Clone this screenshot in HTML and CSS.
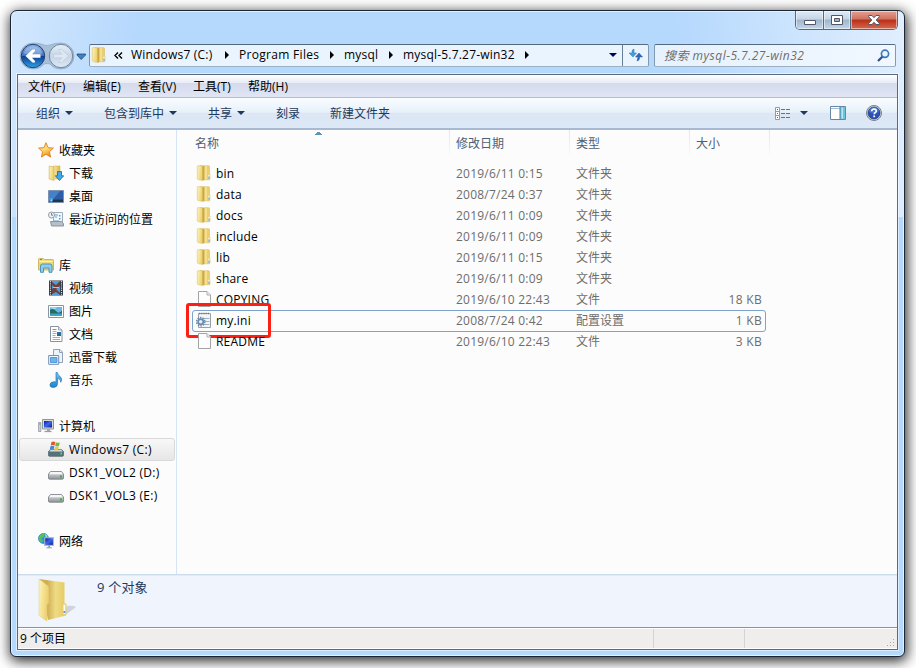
FILE: index.html
```html
<!DOCTYPE html>
<html lang="zh-CN">
<head>
    <meta charset="UTF-8">
    <meta name="viewport" content="width=device-width, initial-scale=1.0">
    <title>mysql-5.7.27-win32</title>
    <link rel="stylesheet" href="styles.css">
</head>
<body>
    <!-- icon definitions -->
    <svg class="defs" width="0" height="0">
        <defs>
            <linearGradient id="gold" x1="0" x2="1" y1="0" y2="0"><stop offset="0" stop-color="#fbeea6"/><stop offset="1" stop-color="#dcb94e"/></linearGradient>
            <linearGradient id="back" x1="0" x2="1" y1="0" y2="0"><stop offset="0.3" stop-color="#cfae50"/><stop offset="0.6" stop-color="#eddb84"/><stop offset="1" stop-color="#e6c95f"/></linearGradient>
            <linearGradient id="fold" x1="0" x2="1" y1="0" y2="0.3"><stop offset="0" stop-color="#fdf5bd"/><stop offset="1" stop-color="#ecd06c"/></linearGradient>
            <linearGradient id="blue" x1="0" x2="0" y1="0" y2="1"><stop offset="0" stop-color="#8cb8ea"/><stop offset="0.48" stop-color="#3f72bd"/><stop offset="0.5" stop-color="#0b3d91"/><stop offset="1" stop-color="#2aa5e8"/></linearGradient>
            <linearGradient id="glass" x1="0" x2="0" y1="0" y2="1"><stop offset="0" stop-color="#e6eff8"/><stop offset="0.5" stop-color="#c5d6e8"/><stop offset="1" stop-color="#d9e8f6"/></linearGradient>
            <linearGradient id="screen" x1="0" x2="1" y1="0" y2="1"><stop offset="0" stop-color="#0819a8"/><stop offset="0.5" stop-color="#3c68e8"/><stop offset="1" stop-color="#0a1c9c"/></linearGradient>
            <linearGradient id="sky" x1="0" x2="0" y1="0" y2="1"><stop offset="0" stop-color="#7cc4f2"/><stop offset="1" stop-color="#1783cf"/></linearGradient>
            <linearGradient id="star" x1="0" x2="0.4" y1="0" y2="1"><stop offset="0" stop-color="#ffb84a"/><stop offset="0.5" stop-color="#ffe37a"/><stop offset="1" stop-color="#f58d1d"/></linearGradient>
            <linearGradient id="disk" x1="0" x2="0" y1="0" y2="1"><stop offset="0" stop-color="#e4e5e8"/><stop offset="1" stop-color="#8f9298"/></linearGradient>
        </defs>
        <symbol id="i-folder" viewBox="0 0 16 16">
            <path d="M4 .7h8.700q.8 0 .8.8V9l.5.6v4.400q0 .8-.8.8H6z" fill="#e9cf70" stroke="#d5b458" stroke-width=".5"/>
            <path d="M1.500.7H5.500q1 0 1 1v13.800L2 14.600q-.7-.2-.7-1V1.200z" fill="url(#fold)" stroke="#d9bd62" stroke-width=".5"/>
            <path d="M6.500 1h1.700v14.300H6.500z" fill="#c9a64b"/>
            <path d="M9 1h2v13.500h-2z" fill="#f3df8c"/>
            <path d="M12.500 9.800h1.100v4h-1.100z" fill="#fff"/><path d="M12.500 11.500h1.100v2.300h-1.100z" fill="#4fa0de"/>
        </symbol>
        <symbol id="i-star" viewBox="0 0 16 16">
            <path d="M8 .7l2.100 5 5.300.4-4 3.600 1.200 5.400L8 12.200l-4.600 2.900 1.200-5.400-4-3.600 5.300-.4z" fill="url(#star)" stroke="#dd7f24" stroke-width=".9"/>
        </symbol>
        <symbol id="i-download" viewBox="0 0 16 16">
            <path d="M5 1h7v13H5z" fill="url(#gold)" stroke="#cfae55" stroke-width=".5"/>
            <path d="M1.200 1L6 2v13.500L1.200 14z" fill="url(#fold)" stroke="#d0b057" stroke-width=".6"/>
            <path d="M9.500 6.500h4v4.300h2.200l-4.200 4.700-4.200-4.700h2.200z" fill="#42a9ea" stroke="#1269b0" stroke-width=".8"/>
        </symbol>
        <symbol id="i-desktop" viewBox="0 0 16 16">
            <path d="M.5 2.500h15v12H.5z" fill="#1d3d73" stroke="#7c92b4"/>
            <path d="M1 3h14v8.500H1z" fill="#2c5ea8"/><path d="M1 3h11L5 11.500H1z" fill="#4580c8"/>
            <path d="M1 12h14v2H1z" fill="#26344a"/><circle cx="3" cy="12" r="1.900" fill="#4fa7e5"/>
            <path d="M2 11h1v1H2z" fill="#e65b32"/><path d="M3 11h1v1H3z" fill="#8bd048"/><path d="M3 12h1v1H3z" fill="#f8cf3d"/>
        </symbol>
        <symbol id="i-recent" viewBox="0 0 16 16">
            <path d="M5.500 1.500h9v10h-9z" fill="#f4f7fb" stroke="#9daab7"/>
            <path d="M2.500 10.500h11l2 2v2.500h-12z" fill="#b8bec5" stroke="#8c949d"/>
            <path d="M7 4h3M7 6h2M6 10h5" stroke="#53a6d8" stroke-width="1.200"/><path d="M11 4h1.500v1.500H11zM11 7h1.500v1.500H11z" fill="#5a9bd0"/>
            <circle cx="3.500" cy="4" r="3" fill="#eef1f5" stroke="#929ba7"/><path d="M3.500 2v2.200H5" fill="none" stroke="#596879" stroke-width=".8"/>
        </symbol>
        <symbol id="i-library" viewBox="0 0 16 16">
            <path d="M.5 2.500q0-1 1-1h4l1 1h8q1 0 1 1v9.500H.5z" fill="#eed879" stroke="#c7a950" stroke-width=".8"/>
            <path d="M1.500 4.500h13" stroke="#fff4b8"/><path d="M2 2.500h2" stroke="#45ac3f" stroke-width="1.200"/>
            <path d="M2.500 15.300V9q0-2 2-2h7.500q2 0 2 2v6.300h-3V11h-5.500v4.300z" fill="#8bcff0" stroke="#3c8dbd" stroke-width=".9"/>
        </symbol>
        <symbol id="i-video" viewBox="0 0 16 16">
            <path d="M1 .5h14v15H1z" fill="#303843"/><path d="M4 1h8v14H4z" fill="#4d9edb"/>
            <path d="M4 2l4 3 4-4v5L8 9l4 4v2L8 12l-4 2v-5l2-2-2-2z" fill="#70403c"/>
            <path d="M5 7.500h6" stroke="#8ad1f5"/>
            <path d="M2.500 1v14M13.500 1v14" stroke="#d6dde4" stroke-width="1.200" stroke-dasharray="1.200 1"/>
        </symbol>
        <symbol id="i-picture" viewBox="0 0 16 16">
            <path d="M.5 2.500h15v12H.5z" fill="#fff" stroke="#8b959f"/><path d="M2 4h12v9H2z" fill="#68b7e9"/>
            <path d="M2 7q3-2.500 6 1t6-.5V11H2z" fill="#266b60"/><path d="M2 10.500h12V13H2z" fill="#3fa3c9"/><path d="M2 4.500q4 2.500 7 0z" fill="#c9ecfb"/>
        </symbol>
        <symbol id="i-doc" viewBox="0 0 16 16">
            <path d="M2.500.5h8l3.500 3.500v11.500H2.500z" fill="#fff" stroke="#89939e"/><path d="M10.500.5V4H14" fill="#e2e6eb" stroke="#89939e" stroke-width=".8"/>
            <path d="M4.500 3.500h4" stroke="#56a79d"/><path d="M4.500 5.500h4M4.500 7.500h4M4.500 9.500h3M4.500 11.500h7.500M4.500 13.500h7.500" stroke="#9cabd0"/>
            <path d="M9 6h4v4H9z" fill="#2c6db8"/><path d="M9 9q2-2 4 0v1H9z" fill="#2c705f"/>
        </symbol>
        <symbol id="i-thunder" viewBox="0 0 16 16">
            <path d="M5.500.5H12l2.500 2.500v10.500h-9z" fill="#edf3fa" stroke="#8fa2b7"/><path d="M11.500.5v3h3" fill="none" stroke="#8fa2b7"/>
            <path d="M.7 6.500h10v8.800H.7z" fill="#f5fafe" stroke="#768fae"/><path d="M2.500 8.500h6.500v5H2.500z" fill="#69b5f2" stroke="#438cd2" stroke-width=".8"/>
        </symbol>
        <symbol id="i-music" viewBox="0 0 16 16">
            <path d="M8 .5h1.300q.2 2.200 2.600 3.800 3 2.200.9 6 .2-3.300-3.200-4v5.200q-.2 3.800-4.200 4-3.500 0-3.500-2.500 0-3 4-3.300 1.300 0 2.100.4z" fill="url(#sky)" stroke="#2179b5" stroke-width=".7"/>
        </symbol>
        <symbol id="i-computer" viewBox="0 0 16 16">
            <path d="M.6 4.500h2.300v9H.6z" fill="#cfd3d6" stroke="#858c92" stroke-width=".7"/><path d="M1.200 6h1.200" stroke="#4bae43"/>
            <path d="M4.500 1.500h11v9.500h-11z" fill="#d8dadd" stroke="#8e949b"/><path d="M6 3h8v6.500H6z" fill="url(#screen)"/>
            <path d="M9 11h3v2H9z" fill="#a5a9ae"/><path d="M6.500 13.500h7" stroke="#999ea4" stroke-width="1.300"/>
        </symbol>
        <symbol id="i-drive" viewBox="0 0 16 16">
            <path d="M2.500 5.500h11L15.500 8v4q0 1.200-1.200 1.200H1.700Q.5 13.200.5 12V8z" fill="url(#disk)" stroke="#777b82" stroke-width=".8"/>
            <path d="M2.800 6h10.400l1.500 2.200H1.300z" fill="#f5f6f7"/><path d="M12 9.300h1.800v2.500H12z" fill="#3cb532"/>
        </symbol>
        <symbol id="i-windrive" viewBox="0 0 16 16">
            <path d="M2.500 8.500h11l2 2v3.800q0 1-1 1h-13q-1 0-1-1v-3.800z" fill="#52737e" stroke="#5c6a72" stroke-width=".8"/>
            <path d="M2.800 8.700h10.400l1.500 1.800H1.300z" fill="#d4dce0"/><path d="M12.400 11.500h1.600v2h-1.600z" fill="#51e03e"/>
            <path d="M3.500 1q2-1.200 3.800 0L6.500 4.600q-2-1-3.800 0z" fill="#e8532b"/><path d="M7.900 1.300q1.800 1 3.900.1l-.9 3.500q-2 1-3.800-.1z" fill="#74b842"/>
            <path d="M2.500 5.200q2-1 3.900 0l-.9 3.500q-2-1-3.800 0z" fill="#3f8cd8"/><path d="M7 5.500q1.800 1 3.800.1L9.900 9q-2 1-3.700-.1z" fill="#f7c52e"/>
        </symbol>
        <symbol id="i-network" viewBox="0 0 16 16">
            <circle cx="5.500" cy="5.500" r="5" fill="#2696dc" stroke="#2077b5" stroke-width=".7"/>
            <path d="M2 2q3-2.500 5-1L5.500 4 3 5.500 5 8 3.500 10Q.5 8 .8 5z" fill="#5cc152"/><path d="M7 1l2.800 2-2 1.500z" fill="#bfefac"/>
            <path d="M6.500 4.500h9v8h-9z" fill="#dbe2ee" stroke="#98a1b2" stroke-width=".7"/><path d="M7.200 5.200h7.700V11.900H7.200z" fill="url(#screen)"/>
            <path d="M10.300 12.500h1.700v1.800h-1.700z" fill="#8f96a1"/><path d="M8.500 14.800h5.300" stroke="#8f96a1"/>
        </symbol>
        <symbol id="i-file" viewBox="0 0 16 16">
            <path d="M2.500.5h8.500l3.500 3.500v11.500h-12z" fill="#fdfdfd" stroke="#a3a3a3"/><path d="M11 .5v3.500h3.500" fill="#eee" stroke="#b0b0b0"/>
        </symbol>
        <symbol id="i-ini" viewBox="0 0 16 16">
            <path d="M2.500 1.500h12v14h-12z" fill="#f2f5f7" stroke="#9aa0a6"/><path d="M3 1.500h11" stroke="#777" stroke-width="1.600" stroke-dasharray="1.200 1"/>
            <path d="M8 6.500h5.500M9 9.500h4.500M8 12.500h5.500" stroke="#9cb4c8"/>
            <circle cx="4.700" cy="9.700" r="4.100" fill="none" stroke="#6c89a8" stroke-width="1.500" stroke-dasharray="1.500 1.080"/>
            <circle cx="4.700" cy="9.700" r="2.600" fill="#e5eefa" stroke="#6c89a8" stroke-width="1.600"/>
        </symbol>
    </svg>

    <div class="window">
        <div class="titlebar">
            <div class="caption-buttons">
                <span class="caption-btn"><svg width="12" height="6" viewBox="0 0 12 6"><path d="M.5 1.500h11v4H.5z" fill="#fff" stroke="#535666"/></svg></span>
                <span class="caption-btn"><svg width="12" height="10" viewBox="0 0 12 10"><path d="M.5.5h11v9H.5z" fill="#fff" stroke="#535666"/><path d="M3.500 3.500h5v3h-5z" fill="#9fb5cd" stroke="#535666"/></svg></span>
                <span class="caption-btn close-btn"><svg width="12" height="10" viewBox="0 0 12 10"><path d="M.7.500H4L6 2.700 8 .5h3.300v1.300L8.200 5l3.100 3.200v1.300H8L6 7.300 4 9.500H.7V8.200L3.800 5 .7 1.800z" fill="#fff" stroke="#535666"/></svg></span>
            </div>
        </div>

        <div class="navbar">
            <svg class="nav-buttons" width="68" height="28" viewBox="0 0 68 28">
                <path d="M14 1q7 0 11 2 3 1 6 0 5-2 11-2a13 13 0 0 1 0 26q-7 0-11-5-3-1-6 0-4 5-11 5a13 13 0 0 1 0-26z" fill="#a9bfd8" stroke="#8ea5c0" stroke-width=".7"/>
                <circle cx="14" cy="14" r="11.700" fill="url(#blue)" stroke="#25406f" stroke-width="1"/>
                <path d="M4.500 11.500A10 10 0 0 1 23.500 11.500Q14 14 4.500 11.500z" fill="#fff" opacity=".25"/>
                <path d="M6.500 14l7-6.500h2.500V9l-3 3.200h8.500v3.600H13l3 3.200v1.500h-2.500z" fill="#fff"/>
                <circle cx="42" cy="14" r="11.700" fill="url(#glass)" stroke="#71849b" stroke-width="1"/>
                <path d="M49.500 14l-7-6.500H40V9l3 3.200h-8.500v3.600H43L40 19v1.500h2.500z" fill="#dfe8f2" stroke="#b8c8da" stroke-width=".6"/>
                <path d="M58 12h8.500v1L62.200 17.500 58 13z" fill="#3d83bd" stroke="#1b4a80" stroke-width=".8"/>
            </svg>
            <div class="address">
                <svg class="icon"><use href="#i-folder"/></svg>
                <svg class="chevrons" width="9" height="7" viewBox="0 0 9 7"><path d="M4 .5L1 3.500l3 3M8 .5L5 3.500l3 3" fill="none" stroke="#000" stroke-width="1.400"/></svg>
                <span class="crumb crumb-drive">Windows7 (C:)</span><i class="arrow-right"></i>
                <span class="crumb crumb-programs">Program Files</span><i class="arrow-right"></i>
                <span class="crumb crumb-mysql">mysql</span><i class="arrow-right"></i>
                <span class="crumb crumb-current">mysql-5.7.27-win32</span><i class="arrow-right"></i>
                <i class="arrow-down history"></i>
                <span class="refresh"><svg width="16" height="14" viewBox="0 0 16 14"><path d="M6 1Q3.500 1.500 4 5H1l4 4 3.500-4H6z" fill="#3aa2dc" stroke="#2878b8" stroke-width=".5"/><path d="M9 13q3-.5 2.500-4h3L11 5 7.500 9H10z" fill="#3267ba" stroke="#2756a5" stroke-width=".5"/></svg></span>
            </div>
            <div class="search">
                <span class="search-text">搜索 mysql-5.7.27-win32</span>
                <svg width="13" height="13" viewBox="0 0 13 13"><circle cx="8" cy="4.800" r="3.600" fill="#eaf5ff" stroke="#3d7ab8" stroke-width="1.700"/><path d="M5.300 7.700L1 12" stroke="#2b4d96" stroke-width="2.200"/></svg>
            </div>
        </div>

        <div class="client">
            <div class="menubar">
                <span>文件(F)</span>
                <span>编辑(E)</span>
                <span>查看(V)</span>
                <span>工具(T)</span>
                <span>帮助(H)</span>
            </div>

            <div class="toolbar">
                <span class="tool tool-organize">组织<i class="arrow-down"></i></span>
                <span class="tool tool-include">包含到库中<i class="arrow-down"></i></span>
                <span class="tool tool-share">共享<i class="arrow-down"></i></span>
                <span class="tool tool-burn">刻录</span>
                <span class="tool">新建文件夹</span>
                <div class="view-tools">
                    <svg width="16" height="13" viewBox="0 0 16 13"><path d="M.5.500h4v12h-4zM.5 4.500h4M.5 8.500h4" fill="#fff" stroke="#8f9bad"/><path d="M2 2h1v1H2zM2 10h1v1H2z" fill="#3b639e"/><path d="M2 6h1v1H2z" fill="#e0342b"/><path d="M6 2.500h9.500M6 6.500h9.500M6 10.500h9.500" stroke="#63728b" stroke-dasharray="4 1"/></svg>
                    <i class="arrow-down"></i>
                    <svg class="preview-icon" width="16" height="14" viewBox="0 0 16 14"><path d="M.5.500h15v13H.5z" fill="#fff" stroke="#6787a6"/><path d="M1 2.500h9" stroke="#a6bdd2"/><path d="M10 1h5v12h-5z" fill="#6cc5dc"/><path d="M10 .5v13" stroke="#4e7e9f"/><path d="M11.500 1.500h1.500v11h-1.500z" fill="#b4e9f3"/></svg>
                    <svg class="help-icon" width="16" height="16" viewBox="0 0 16 16"><circle cx="8" cy="8" r="7.500" fill="#d7dce6" stroke="#777f8d"/><circle cx="8" cy="8" r="6" fill="#2951b6" stroke="#1b3176" stroke-width=".7"/><path d="M3 7a5 5 0 0 1 10 0q-5 2-10 0z" fill="#6d92df" opacity=".5"/><path d="M5.700 6.300Q5.800 4 8.100 4q2.300.1 2.200 2 0 1-1.200 1.800-.9.600-.9 1.500" fill="none" stroke="#fff" stroke-width="1.700"/><path d="M7.300 10.500H9.100v1.700H7.300z" fill="#fff"/></svg>
                </div>
            </div>

            <div class="main">
                <div class="sidebar">
                    <div class="group">
                        <div class="side-item top"><svg class="icon"><use href="#i-star"/></svg>收藏夹</div>
                        <div class="side-item"><svg class="icon"><use href="#i-download"/></svg>下载</div>
                        <div class="side-item"><svg class="icon"><use href="#i-desktop"/></svg>桌面</div>
                        <div class="side-item"><svg class="icon"><use href="#i-recent"/></svg>最近访问的位置</div>
                    </div>
                    <div class="group">
                        <div class="side-item top"><svg class="icon"><use href="#i-library"/></svg>库</div>
                        <div class="side-item"><svg class="icon"><use href="#i-video"/></svg>视频</div>
                        <div class="side-item"><svg class="icon"><use href="#i-picture"/></svg>图片</div>
                        <div class="side-item"><svg class="icon"><use href="#i-doc"/></svg>文档</div>
                        <div class="side-item"><svg class="icon"><use href="#i-thunder"/></svg>迅雷下载</div>
                        <div class="side-item"><svg class="icon"><use href="#i-music"/></svg>音乐</div>
                    </div>
                    <div class="group">
                        <div class="side-item top"><svg class="icon"><use href="#i-computer"/></svg>计算机</div>
                        <div class="side-item latin active"><svg class="icon"><use href="#i-windrive"/></svg>Windows7 (C:)</div>
                        <div class="side-item latin drive"><svg class="icon"><use href="#i-drive"/></svg>DSK1_VOL2 (D:)</div>
                        <div class="side-item latin drive"><svg class="icon"><use href="#i-drive"/></svg>DSK1_VOL3 (E:)</div>
                    </div>
                    <div class="group">
                        <div class="side-item top"><svg class="icon"><use href="#i-network"/></svg>网络</div>
                    </div>
                </div>

                <div class="files">
                    <div class="file-header">
                        <span class="sorted">名称</span>
                        <span>修改日期</span>
                        <span>类型</span>
                        <span>大小</span>
                    </div>
                    <div class="file-row"><span class="name"><svg class="icon"><use href="#i-folder"/></svg>bin</span><span class="date">2019/6/11 0:15</span><span>文件夹</span><span></span></div>
                    <div class="file-row"><span class="name"><svg class="icon"><use href="#i-folder"/></svg>data</span><span class="date">2008/7/24 0:37</span><span>文件夹</span><span></span></div>
                    <div class="file-row"><span class="name"><svg class="icon"><use href="#i-folder"/></svg>docs</span><span class="date">2019/6/11 0:09</span><span>文件夹</span><span></span></div>
                    <div class="file-row"><span class="name"><svg class="icon"><use href="#i-folder"/></svg>include</span><span class="date">2019/6/11 0:09</span><span>文件夹</span><span></span></div>
                    <div class="file-row"><span class="name"><svg class="icon"><use href="#i-folder"/></svg>lib</span><span class="date">2019/6/11 0:15</span><span>文件夹</span><span></span></div>
                    <div class="file-row"><span class="name"><svg class="icon"><use href="#i-folder"/></svg>share</span><span class="date">2019/6/11 0:09</span><span>文件夹</span><span></span></div>
                    <div class="file-row"><span class="name"><svg class="icon"><use href="#i-file"/></svg>COPYING</span><span class="date">2019/6/10 22:43</span><span>文件</span><span class="size">18 KB</span></div>
                    <div class="file-row focused"><span class="name"><svg class="icon"><use href="#i-ini"/></svg>my.ini</span><span class="date">2008/7/24 0:42</span><span>配置设置</span><span class="size">1 KB</span><b class="marker"></b></div>
                    <div class="file-row"><span class="name"><svg class="icon"><use href="#i-file"/></svg>README</span><span class="date">2019/6/10 22:43</span><span>文件</span><span class="size">3 KB</span></div>
                </div>
            </div>

            <div class="details">
                <svg width="42" height="46" viewBox="0 0 42 46">
                    <path d="M27 38l12-9q-4-2-9-1z" fill="#aab4c2" opacity=".5"/>
                    <path d="M2 1l25.500 3.500V25l2 1v10q0 1.500-1.500 1.800L11 42z" fill="url(#back)"/>
                    <path d="M2 1l8.500 6.500q1 .7 1 2V25l-1.700 2 .2 16.200L2.800 38q-.8-.7-.8-2z" fill="url(#fold)" stroke="#e6cf7c" stroke-width=".5"/>
                    <path d="M26.500 26.500h1.800v9.500h-1.800z" fill="#fff"/><path d="M26.500 33h1.800v2h-1.800z" fill="#4e9dd5"/>
                </svg>
                <span>9 个对象</span>
            </div>

            <div class="statusbar">
                <span class="status-text">9 个项目</span>
                <span class="status-cell"></span>
                <span class="status-cell status-grip">
                    <svg width="9" height="9" viewBox="0 0 9 9"><path d="M7 1h1v1H7zM4 4h1v1H4zM7 4h1v1H7zM1 7h1v1H1zM4 7h1v1H4zM7 7h1v1H7z" fill="#a9a6a6"/></svg>
                </span>
            </div>
        </div>
    </div>
</body>
</html>
```

FILE: styles.css
```css
* {
    box-sizing: border-box;
}
body {
    margin: 0;
    padding: 10px;
    height: 668px;
    overflow: hidden;
    background: #fff;
    font-family: "Open Sans", "Noto Sans CJK SC", sans-serif;
    font-size: 12px;
    line-height: 18px;
    color: #000;
}
.defs {
    position: absolute;
}
.icon {
    width: 16px;
    height: 16px;
    flex: none;
}
.window {
    width: 895px;
    height: 647px;
    padding: 0 6px;
    border: 1px solid #1c2632;
    border-radius: 7px 7px 6px 6px;
    background:
        linear-gradient(100deg, rgba(255,255,255,.4) 0, rgba(255,255,255,0) 130px) no-repeat 0 0 / 100% 206px,
        linear-gradient(260deg, rgba(255,255,255,.6) 0, rgba(255,255,255,0) 230px) no-repeat 0 0 / 100% 206px,
        #b5d8fd;
    box-shadow: inset 0 0 0 1px #e4f2ff, 1px 3px 13px 1px rgba(0, 0, 0, .85);
}
.titlebar {
    height: 33px;
    display: flex;
    justify-content: flex-end;
}
.caption-buttons {
    display: flex;
    height: 19px;
    width: 103px;
    border: 1px solid #56697c;
    border-top: none;
    border-radius: 0 0 5px 5px;
    overflow: hidden;
}
.caption-btn {
    display: flex;
    align-items: center;
    justify-content: center;
    width: 27px;
    border-right: 1px solid #56697c;
    background: linear-gradient(#e0ebf6, #c5d5e6 45%, #9eb5cc 50%, #c1d6e9);
    box-shadow: inset 0 0 0 1px rgba(255, 255, 255, .5);
}
.caption-btn:first-child {
    width: 28px;
}
.caption-btn:first-child svg {
    margin-top: 4px;
}
.caption-btn.close-btn {
    flex: 1;
    border-right: none;
    background: linear-gradient(#e4a193, #d0715f 45%, #b92f19 50%, #d6694d);
}

/* address row */
.navbar {
    display: flex;
    height: 22px;
    align-items: center;
    margin-bottom: 8px;
}
.nav-buttons {
    flex: none;
    margin: -3px 2px -4px 2px;
}
.address {
    display: flex;
    align-items: center;
    width: 560px;
    height: 23px;
    margin-right: 5px;
    padding-left: 1px;
    border: 1px solid #67809a;
    border-color: #536a82 #8298ae #9cb0c4;
    border-radius: 2px;
    background: #eaf4fe;
}
.chevrons {
    margin: 0 8px 0 7px;
}
.crumb {
    white-space: nowrap;
    letter-spacing: .2px;
}
.crumb-drive {
    width: 94px;
}
.crumb-programs {
    width: 91px;
    letter-spacing: .3px;
}
.crumb-mysql {
    width: 45px;
}
.crumb-current {
    width: 122px;
}
.arrow-right {
    width: 4px;
    margin-right: 10px;
    border: 4px solid transparent;
    border-left-color: #000;
    border-right: none;
}
.arrow-down {
    display: inline-block;
    border: 4px solid transparent;
    border-top-color: #1e395b;
    border-bottom: none;
}
.history {
    margin-left: auto;
    margin-right: 5px;
    border-top-color: #000060;
}
.refresh {
    display: flex;
    align-items: center;
    justify-content: center;
    width: 26px;
    height: 21px;
    border-left: 1px solid #67809a;
}
.search {
    display: flex;
    align-items: center;
    justify-content: space-between;
    width: 242px;
    height: 23px;
    padding: 0 5px 0 9px;
    border: 1px solid #67809a;
    border-color: #536a82 #8298ae #9cb0c4;
    border-radius: 2px;
    background: linear-gradient(90deg, #e6f2fe, #f0f7ff);
    color: #6d6d6d;
    font-style: italic;
}
.search-text {
    padding-top: 1px;
    letter-spacing: .5px;
}

/* client area */
.client {
    display: flex;
    flex-direction: column;
    width: 881px;
    height: 576px;
    border: 1px solid #586b80;
    box-shadow: 0 0 0 1px rgba(255, 255, 255, .55);
    background: #fcfcfc;
}
.menubar {
    display: flex;
    flex: none;
    height: 23px;
    padding-left: 10px;
    line-height: 23px;
    border-bottom: 1px solid #b4bdd0;
    background: linear-gradient(#fff, #e9ecf6 35%, #d5daec 37%, #e1e6f6);
}
.menubar span {
    width: 55px;
    white-space: nowrap;
}
.toolbar {
    display: flex;
    flex: none;
    align-items: center;
    height: 32px;
    padding-left: 18px;
    border-bottom: 2px solid #a9b9d1;
    background: linear-gradient(#fafdff, #e6f0fa 48%, #dce6f4 50%, #dde9f7);
    color: #1e395b;
}
.tool {
    display: flex;
    align-items: center;
    padding-top: 2px;
    white-space: nowrap;
}
.tool .arrow-down {
    margin: -2px 0 0 5px;
}
.tool-organize {
    width: 68px;
}
.tool-include {
    width: 104px;
}
.tool-share {
    width: 68px;
}
.tool-burn {
    width: 54px;
}
.view-tools {
    display: flex;
    align-items: center;
    margin-left: auto;
    margin-right: 15px;
}
.view-tools .arrow-down {
    margin-left: 9px;
}
.preview-icon {
    margin-left: 22px;
}
.help-icon {
    margin-left: 20px;
}
.main {
    display: flex;
    flex: none;
    height: 444px;
}
.sidebar {
    width: 159px;
    padding-top: 8px;
    border-right: 1px solid #d6e5f5;
}
.group {
    margin-bottom: 23px;
}
.side-item {
    display: flex;
    align-items: center;
    gap: 5px;
    height: 23px;
    margin: 0 1px;
    padding: 2px 0 0 29px;
    white-space: nowrap;
}
.side-item .icon {
    margin-top: -2px;
}
.side-item.top {
    padding-left: 19px;
}
.side-item.active {
    margin: 1px 1px -1px;
    padding: 0 0 0 28px;
    border: 1px solid #d9d9d9;
    border-radius: 3px;
    background: linear-gradient(#f8f8f8, #e6e6e6);
}
.side-item.drive .icon {
    margin-top: 2px;
}
.latin {
    letter-spacing: .3px;
}

/* file list */
.files {
    flex: 1;
    padding-left: 15px;
}
.file-header,
.file-row {
    display: grid;
    grid-template-columns: 258px 120px 120px 76px;
    align-items: center;
}
.file-header {
    grid-template-columns: 258px 120px 120px 80px;
    height: 24px;
    margin-bottom: 8px;
    color: #4c607a;
}
.file-header span {
    height: 24px;
    padding: 5px 0 0 6px;
    border-right: 1px solid;
    border-image: linear-gradient(#dce8f4, #f4f8fb) 1;
}
.file-header .sorted {
    padding-left: 3px;
    background: conic-gradient(from 135deg at 50% 0, #5898b5 90deg, transparent 0) no-repeat 123px 1px / 8px 4px;
}
.file-row {
    position: relative;
    width: 574px;
    height: 21px;
    color: #6d6d6d;
}
.file-row span {
    padding: 2px 0 0 6px;
}
.file-row .name {
    display: flex;
    align-items: center;
    gap: 4px;
    padding-left: 4px;
    color: #000;
    letter-spacing: .2px;
}
.name .icon {
    margin-top: -2px;
}
.file-row .date {
    letter-spacing: .23px;
}
.file-row .size {
    padding: 2px 4px 0 0;
    text-align: right;
    letter-spacing: .3px;
}
.focused::before {
    content: "";
    position: absolute;
    inset: 1px 0 -2px;
    border: 1px solid #7da2ce;
    border-radius: 3px;
}
.marker {
    position: absolute;
    left: -6px;
    top: -6px;
    width: 85px;
    height: 35px;
    border: 3px solid #fb1f14;
    border-radius: 3px;
}

/* bottom panes */
.details {
    display: flex;
    flex: none;
    height: 53px;
    padding: 3px 0 0 19px;
    border-top: 1px solid #cddcec;
    box-shadow: inset 0 1px #e1ebf7;
    background: #f0f4fc;
    color: #1e395b;
    font-size: 13px;
}
.details span {
    margin-left: 18px;
    letter-spacing: .2px;
}
.statusbar {
    display: flex;
    flex: 1;
    padding: 1px 0;
    border-top: 1px solid #8f9296;
    box-shadow: inset 0 1px #fff, inset 0 -1px #fff;
    background: #f0eded;
}
.status-text {
    flex: 1;
    padding: 1px 0 0 2px;
    line-height: 18px;
}
.status-cell {
    width: 91px;
    border-left: 1px solid #d5d3d3;
}
.status-grip {
    display: flex;
    align-items: flex-end;
    justify-content: flex-end;
    width: 153px;
    padding: 0 2px 1px 0;
}
```
